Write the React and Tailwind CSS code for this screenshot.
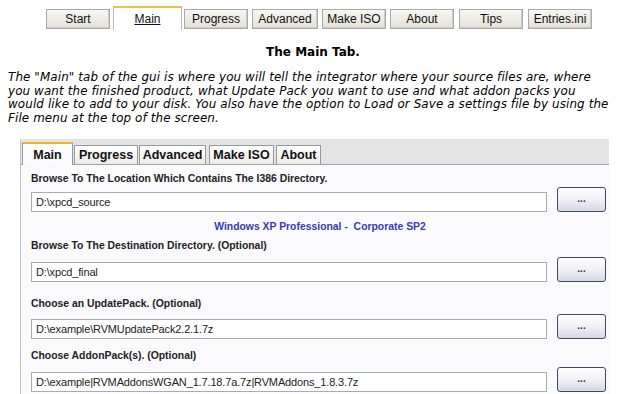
import React from "react";

const navBtn =
  "h-[20px] mt-[3px] flex items-center justify-center border border-[#a9a9a9] bg-gradient-to-b from-[#f7f6f2] to-[#e4e1d8] text-[12px] text-[#111] shadow-[inset_-1px_-1px_0_#d0ccc0]";

function NavButton({ label, w, ml }) {
  return (
    <div className={navBtn} style={{ width: w, marginLeft: ml }}>
      {label}
    </div>
  );
}

function Tab({ label, w, active }) {
  if (active) {
    return (
      <div
        className="h-[23px] mt-[3px] flex items-start justify-center pt-[2px] bg-[#fbfbfd] border-x border-[#919b9c] border-t-2 border-t-[#f0b030] text-[12.5px] font-bold text-[#111] relative z-10 -mb-px"
        style={{ width: w }}
      >
        {label}
      </div>
    );
  }
  return (
    <div
      className="h-[19px] mt-[6px] flex items-center justify-center bg-gradient-to-b from-[#ffffff] to-[#ecebe6] border border-b-0 border-[#919b9c] text-[12.5px] font-bold text-[#111] ml-[1px]"
      style={{ width: w }}
    >
      {label}
    </div>
  );
}

function Row({ value, mt }) {
  return (
    <div className="flex items-end" style={{ marginTop: mt }}>
      <div className="w-[516px] h-[20px] bg-white border border-[#a8acb2] flex items-center pl-[4px] text-[11px] tracking-[-0.15px] text-[#222] leading-none whitespace-nowrap">
        {value}
      </div>
      <div className="ml-[10px] w-[49px] h-[25px] rounded-[3px] border border-[#3c4a64] bg-gradient-to-b from-[#ffffff] via-[#f0f0f6] to-[#d6d8e4] flex items-center justify-center text-[10px] font-bold text-[#333] leading-none pb-[2px]">
        ...
      </div>
    </div>
  );
}

function Label({ children, mt }) {
  return (
    <div
      className="text-[10.4px] leading-[12px] font-bold text-[#222] whitespace-nowrap"
      style={{ marginTop: mt }}
    >
      {children}
    </div>
  );
}

export default function App() {
  return (
    <div
      className="w-[618px] h-[394px] overflow-hidden bg-white"
      style={{ fontFamily: "'Liberation Sans', Arial, sans-serif" }}
    >
      <div className="flex items-start pl-[46px] pt-[6px] h-[30px]">
        <NavButton label="Start" w={64} ml={0} />
        <div className="w-[69px] h-[24px] ml-[3px] flex items-center justify-center bg-white border-x border-[#b9b9b9] border-t-2 border-t-[#f2c040] text-[12px] text-[#111] underline">
          Main
        </div>
        <NavButton label="Progress" w={64} ml={2} />
        <NavButton label="Advanced" w={66} ml={4} />
        <NavButton label="Make ISO" w={64} ml={4} />
        <NavButton label="About" w={64} ml={4} />
        <NavButton label="Tips" w={64} ml={5} />
        <NavButton label="Entries.ini" w={64} ml={5} />
      </div>

      <div
        className="mt-[15px] text-center text-[12px] leading-[14px] font-bold text-black pl-[8px]"
        style={{ fontFamily: "'DejaVu Sans', Verdana, sans-serif" }}
      >
        The Main Tab.
      </div>

      <p
        className="mt-[12px] px-[8px] text-[11.9px] leading-[13.5px] tracking-[0.12px] italic text-black whitespace-nowrap"
        style={{ fontFamily: "'DejaVu Sans', Verdana, sans-serif" }}
      >
        The "Main" tab of the gui is where you will tell the integrator where
        your source files are, where
        <br />
        you want the finished product, what Update Pack you want to use and
        what addon packs you
        <br />
        would like to add to your disk. You also have the option to Load or
        Save a settings file by using the
        <br />
        File menu at the top of the screen.
      </p>

      <div className="mt-[14px] ml-[20px] w-[589px] h-[260px] border-l border-[#c4c4c4] flex flex-col">
        <div className="h-[26px] bg-[#e4e4e4] border-b border-[#a0a4a8] flex items-start pl-[1px]">
          <Tab label="Main" w={51} active />
          <Tab label="Progress" w={64} />
          <Tab label="Advanced" w={67} />
          <div className="w-[2px]" />
          <Tab label="Make ISO" w={65} />
          <div className="w-[1px]" />
          <Tab label="About" w={45} />
        </div>
        <div className="flex-1 bg-[#fafafd] pl-[10px]">
          <Label mt={8}>
            Browse To The Location Which Contains The I386 Directory.
          </Label>
          <Row value="D:\xpcd_source" mt={2} />
          <div className="mt-[9px] text-center text-[10.4px] leading-[12px] font-bold text-[#3a3ab0]">
            Windows XP Professional -&nbsp; Corporate SP2
          </div>
          <Label mt={7}>Browse To The Destination Directory. (Optional)</Label>
          <Row value="D:\xpcd_final" mt={5} />
          <Label mt={16}>Choose an UpdatePack. (Optional)</Label>
          <Row value="D:\example\RVMUpdatePack2.2.1.7z" mt={4} />
          <Label mt={11}>Choose AddonPack(s). (Optional)</Label>
          <Row
            value="D:\example|RVMAddonsWGAN_1.7.18.7a.7z|RVMAddons_1.8.3.7z"
            mt={5}
          />
        </div>
      </div>
    </div>
  );
}
